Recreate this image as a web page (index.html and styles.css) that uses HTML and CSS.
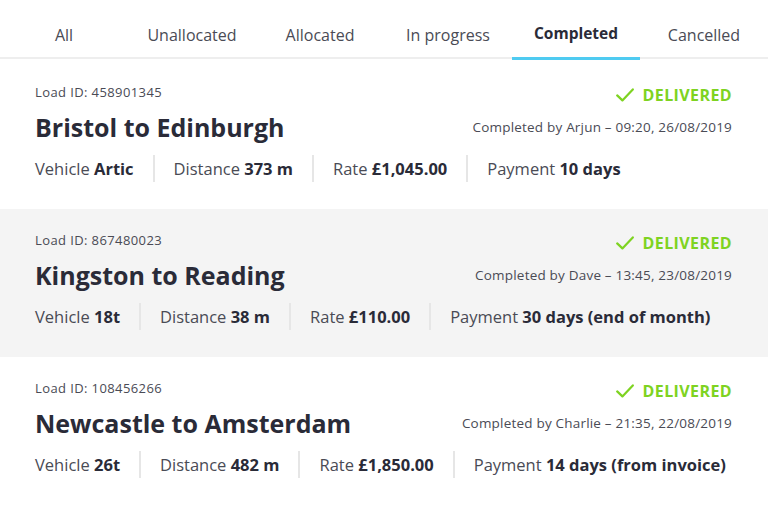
FILE: index.html
```html
<!DOCTYPE html>
<html lang="en">
<head>
<meta charset="utf-8">
<title>Loads - Completed</title>
<link rel="stylesheet" href="styles.css">
</head>
<body>
<nav class="tabs">
  <a class="tab">All</a>
  <a class="tab">Unallocated</a>
  <a class="tab">Allocated</a>
  <a class="tab">In progress</a>
  <a class="tab tab-active">Completed</a>
  <a class="tab">Cancelled</a>
</nav>
<main class="list">
  <article class="card">
    <div class="card-top">
      <div class="card-left">
        <div class="load-id">Load ID: 458901345</div>
        <h2 class="route">Bristol to Edinburgh</h2>
      </div>
      <div class="card-right">
        <div class="status"><svg class="check" viewBox="0 0 18 14" width="18" height="14"><path d="M1.2 7.4 L6.4 12.4 L16.8 1.4" fill="none" stroke="#7ed321" stroke-width="2.2" stroke-linecap="round" stroke-linejoin="round"/></svg>DELIVERED</div>
        <div class="completed-by">Completed by Arjun – 09:20, 26/08/2019</div>
      </div>
    </div>
    <div class="details">
      <span class="detail">Vehicle <b>Artic</b></span>
      <span class="detail">Distance <b>373 m</b></span>
      <span class="detail">Rate <b>£1,045.00</b></span>
      <span class="detail">Payment <b>10 days</b></span>
    </div>
  </article>
  <article class="card card-alt">
    <div class="card-top">
      <div class="card-left">
        <div class="load-id">Load ID: 867480023</div>
        <h2 class="route">Kingston to Reading</h2>
      </div>
      <div class="card-right">
        <div class="status"><svg class="check" viewBox="0 0 18 14" width="18" height="14"><path d="M1.2 7.4 L6.4 12.4 L16.8 1.4" fill="none" stroke="#7ed321" stroke-width="2.2" stroke-linecap="round" stroke-linejoin="round"/></svg>DELIVERED</div>
        <div class="completed-by">Completed by Dave – 13:45, 23/08/2019</div>
      </div>
    </div>
    <div class="details">
      <span class="detail">Vehicle <b>18t</b></span>
      <span class="detail">Distance <b>38 m</b></span>
      <span class="detail">Rate <b>£110.00</b></span>
      <span class="detail">Payment <b>30 days (end of month)</b></span>
    </div>
  </article>
  <article class="card">
    <div class="card-top">
      <div class="card-left">
        <div class="load-id">Load ID: 108456266</div>
        <h2 class="route">Newcastle to Amsterdam</h2>
      </div>
      <div class="card-right">
        <div class="status"><svg class="check" viewBox="0 0 18 14" width="18" height="14"><path d="M1.2 7.4 L6.4 12.4 L16.8 1.4" fill="none" stroke="#7ed321" stroke-width="2.2" stroke-linecap="round" stroke-linejoin="round"/></svg>DELIVERED</div>
        <div class="completed-by">Completed by Charlie – 21:35, 22/08/2019</div>
      </div>
    </div>
    <div class="details">
      <span class="detail">Vehicle <b>26t</b></span>
      <span class="detail">Distance <b>482 m</b></span>
      <span class="detail">Rate <b>£1,850.00</b></span>
      <span class="detail">Payment <b>14 days (from invoice)</b></span>
    </div>
  </article>
</main>
</body>
</html>
```
FILE: styles.css
```css
* { box-sizing: border-box; }
html, body { margin: 0; padding: 0; background: #fff; }
body {
  width: 768px;
  height: 506px;
  overflow: hidden;
  font-family: "Open Sans", "Liberation Sans", sans-serif;
  color: #2a2b38;
}
.tabs {
  display: grid;
  grid-template-columns: repeat(6, 1fr);
  height: 59px;
  border-bottom: 2px solid #eeeeee;
}
.tab {
  display: flex;
  align-items: center;
  justify-content: center;
  padding-top: 9px;
  font-size: 16px;
  color: #4a4b55;
  height: 60px;
}
.tab-active {
  font-weight: 700;
  font-size: 15.5px;
  color: #2a2b38;
  border-bottom: 3px solid #4fcbf1;
}
.list { padding-top: 2px; }
.card {
  height: 148px;
  padding: 23px 36px 0 35px;
}
.card-alt { background: #f4f4f4; }
.card-top {
  display: flex;
  justify-content: space-between;
  align-items: flex-start;
}
.load-id {
  font-size: 13px;
  line-height: 17px;
  letter-spacing: 0.4px;
  color: #4a4b55;
  margin-bottom: 10px;
}
.route {
  margin: 0;
  font-size: 25px;
  line-height: 32px;
  font-weight: 700;
  color: #2a2b38;
  white-space: nowrap;
}
.card-right {
  display: flex;
  flex-direction: column;
  align-items: flex-end;
}
.status {
  display: flex;
  align-items: center;
  gap: 9px;
  margin-top: 1px;
  font-size: 16px;
  line-height: 20px;
  font-weight: 700;
  color: #7ed321;
  letter-spacing: 0.4px;
}
.check { display: block; }
.completed-by {
  margin-top: 13px;
  font-size: 13.5px;
  line-height: 18px;
  letter-spacing: 0.2px;
  color: #4a4b55;
  white-space: nowrap;
}
.details {
  display: flex;
  align-items: center;
  margin-top: 12px;
  font-size: 16.5px;
  color: #4a4b55;
  white-space: nowrap;
}
.detail {
  flex: none;
  line-height: 27px;
  padding: 0 19px;
  border-left: 2px solid #e6e6e6;
}
.detail:first-child { padding-left: 0; border-left: none; }
.detail b { font-weight: 700; color: #2a2b38; }
```
